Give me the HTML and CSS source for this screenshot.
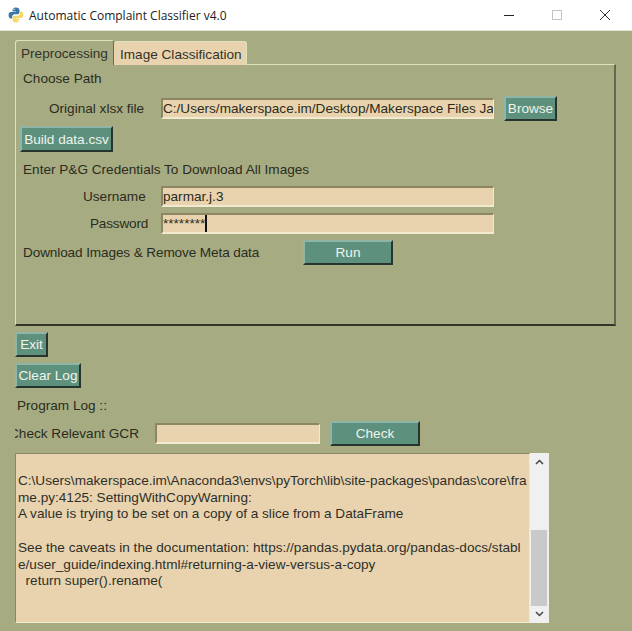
FILE: index.html
```html
<!DOCTYPE html>
<html lang="en">
<head>
<meta charset="utf-8">
<title>Automatic Complaint Classifier v4.0</title>
<link rel="stylesheet" href="styles.css">
</head>
<body>
<header class="titlebar">
  <svg class="app-icon" viewBox="0 0 16 16" width="16" height="16" aria-hidden="true">
    <path fill="#3a76a8" d="M7.8 0.5C5 0.5 4.6 1.6 4.6 2.8V4.4H8V5H3C1.5 5 .6 6.2.6 8.2c0 2 1 3.3 2.3 3.3H4.2V9.7c0-1.3 1.1-2.4 2.5-2.4h2.9c1 0 1.8-.9 1.8-2V2.8c0-1.300-1.300-2.300-3.600-2.300zM6 1.600a.7.7 0 1 1 0 1.400.7.7 0 0 1 0-1.400z"/>
    <path fill="#f5d76a" d="M8.200 15.500c2.800 0 3.200-1.100 3.200-2.300V11.600H8V11h5c1.500 0 2.400-1.200 2.400-3.200 0-2-1-3.300-2.300-3.300H11.800v1.800c0 1.300-1.100 2.400-2.500 2.400H6.400c-1 0-1.800.9-1.800 2v2.500c0 1.300 1.300 2.300 3.600 2.300zM10 14.400a.7.7 0 1 1 0-1.400.7.7 0 0 1 0 1.400z"/>
  </svg>
  <span class="title-text">Automatic Complaint Classifier v4.0</span>
  <div class="window-controls">
    <svg class="win-icon" viewBox="0 0 12 12" width="12" height="12" aria-hidden="true"><path d="M1 6.500H11" stroke="#222" fill="none"/></svg>
    <svg class="win-icon" viewBox="0 0 12 12" width="12" height="12" aria-hidden="true"><rect x="1.500" y="1.500" width="9" height="9" stroke="#c4c4c4" fill="none"/></svg>
    <svg class="win-icon" viewBox="0 0 12 12" width="12" height="12" aria-hidden="true"><path d="M1 1L11 11M11 1L1 11" stroke="#333" fill="none"/></svg>
  </div>
</header>

<main class="app">
  <nav class="tabs">
    <div class="tab tab-active">Preprocessing</div>
    <div class="tab">Image Classification</div>
  </nav>

  <section class="panel">
    <div class="label heading">Choose Path</div>
    <div class="path-row">
      <span class="label path-label">Original xlsx file</span>
      <div class="entry path-entry">C:/Users/makerspace.im/Desktop/Makerspace Files Ja</div>
      <button class="btn browse-btn">Browse</button>
    </div>
    <button class="btn build-btn">Build data.csv</button>
    <div class="label cred-heading">Enter P&amp;G Credentials To Download All Images</div>
    <div class="cred-row user-row">
      <span class="label user-label">Username</span>
      <div class="entry cred-entry">parmar.j.3</div>
    </div>
    <div class="cred-row pass-row">
      <span class="label pass-label">Password</span>
      <div class="entry cred-entry"><span>********</span><span class="caret"></span></div>
    </div>
    <div class="run-row">
      <span class="label run-label">Download Images &amp; Remove Meta data</span>
      <button class="btn wide-btn">Run</button>
    </div>
  </section>

  <button class="btn exit-btn">Exit</button>
  <button class="btn clear-btn">Clear Log</button>
  <div class="label log-label">Program Log ::</div>

  <div class="check-row">
    <div class="check-label"><span class="label">Check Relevant GCR</span></div>
    <div class="entry check-entry"></div>
    <button class="btn wide-btn">Check</button>
  </div>

  <div class="log-wrap">
    <div class="log-text">C:\Users\makerspace.im\Anaconda3\envs\pyTorch\lib\site-packages\pandas\core\fra
me.py:4125: SettingWithCopyWarning:
A value is trying to be set on a copy of a slice from a DataFrame

See the caveats in the documentation: https://pandas.pydata.org/pandas-docs/stabl
e/user_guide/indexing.html#returning-a-view-versus-a-copy
  return super().rename(</div>
    <div class="scrollbar">
      <svg class="arrow" viewBox="0 0 9 6" width="9" height="6" aria-hidden="true"><path d="M1 5L4.500 1.500L8 5" stroke="#444" stroke-width="1.500" fill="none"/></svg>
      <div class="track"><div class="thumb"></div></div>
      <svg class="arrow" viewBox="0 0 9 6" width="9" height="6" aria-hidden="true"><path d="M1 1L4.500 4.500L8 1" stroke="#444" stroke-width="1.500" fill="none"/></svg>
    </div>
  </div>
</main>
</body>
</html>
```

FILE: styles.css
```css
* { box-sizing: border-box; }
html, body { margin: 0; height: 100%; overflow: hidden; }
body {
  background: #a6ab82;
  color: #2b2b20;
  font-family: "Liberation Sans", Arial, sans-serif;
  font-size: 13.600px;
}
.titlebar {
  height: 31px;
  background: #fff;
  border-bottom: 1px solid #e4e6d6;
  display: flex;
  align-items: center;
  padding-left: 8px;
}
.app-icon { margin-right: 5px; }
.title-text {
  font-family: "Open Sans", sans-serif;
  font-size: 12px;
  color: #222;
}
.window-controls {
  margin-left: auto;
  display: flex;
  gap: 36px;
  padding-right: 21px;
}
.app { padding: 9px 0 0 15px; }
.tabs { display: flex; height: 25px; margin-bottom: -1px; position: relative; z-index: 1; }
.tab {
  background: #e8d3ae;
  border: 1px solid #dfe3c0;
  border-bottom: 0;
  border-left: 0;
  border-radius: 3px 3px 0 0;
  padding: 4px 0 0 6px;
  line-height: 18px;
  width: 133px;
  height: 24px;
  margin-top: 1px;
  color: #33332a;
  white-space: nowrap;
}
.tab-active {
  background: #a6ab82;
  border-left: 1px solid #dfe3c0;
  border-right: 1px solid #6b6d50;
  padding-left: 5px;
  width: 99px;
  height: 25px;
  margin-top: 0;
}
.panel {
  width: 601px;
  height: 262px;
  border: 1px solid #dfe3c0;
  border-right: 2px solid #66684c;
  border-bottom: 2px solid #34352a;
  padding: 5px 0 0 5px;
}
.label { line-height: 17px; white-space: nowrap; }
.heading { margin-left: 2px; }
.entry {
  background: #e8d3ae;
  border-top: 2px solid #8d8663;
  border-left: 2px solid #8d8663;
  border-right: 1px solid #f1ead0;
  border-bottom: 2px solid #f1ead0;
  height: 21px;
  line-height: 17px;
  overflow: hidden;
  white-space: nowrap;
}
.btn {
  display: block;
  background: #5d917e;
  color: #f0f3ea;
  font: inherit;
  line-height: 17px;
  padding: 0;
  height: 25px;
  border-top: 2px solid #8fb5a6;
  border-left: 2px solid #8fb5a6;
  border-right: 2px solid #27342d;
  border-bottom: 2px solid #27342d;
}
.path-row { display: flex; align-items: center; margin-top: 9px; height: 25px; }
.path-label { margin-left: 28px; width: 112px; }
.path-entry { width: 333px; }
.browse-btn { width: 53px; margin-left: 10px; }
.build-btn { width: 93px; height: 26px; margin-top: 5px; margin-left: -1px; }
.cred-heading { margin: 9px 0 0 2px; }
.cred-row { display: flex; align-items: center; height: 21px; }
.user-row { margin-top: 8px; }
.pass-row { margin-top: 6px; }
.user-label { margin-left: 62px; width: 78px; }
.pass-label { margin-left: 69px; width: 71px; letter-spacing: -0.2px; }
.cred-entry { width: 333px; }
.caret {
  display: inline-block;
  width: 2px;
  height: 17px;
  background: #111;
  vertical-align: top;
}
.run-row { display: flex; align-items: center; margin-top: 6px; height: 25px; }
.run-label { margin-left: 2px; width: 280px; letter-spacing: -0.12px; }
.wide-btn { width: 90px; }
.exit-btn { width: 33px; margin-top: 6px; }
.clear-btn { width: 66px; margin-top: 6px; }
.log-label { margin: 9px 0 0 2px; }
.check-row { display: flex; align-items: center; margin-top: 7px; height: 25px; }
.check-label {
  width: 124px;
  margin-right: 16px;
  display: flex;
  justify-content: flex-end;
  overflow: hidden;
}
.check-label .label { flex: none; }
.check-entry { width: 165px; margin-right: 10px; }
.log-wrap { display: flex; margin-top: 7px; height: 170px; }
.log-text {
  width: 515px;
  background: #e8d3ae;
  border-top: 1px solid #8d8663;
  border-left: 1px solid #8d8663;
  border-right: 1px solid #f1ead0;
  border-bottom: 1px solid #f1ead0;
  padding: 19px 0 0 2px;
  line-height: 16.700px;
  white-space: pre;
  overflow: hidden;
  color: #2f2f2a;
}
.scrollbar {
  width: 19px;
  background: #f0f0f0;
  display: flex;
  flex-direction: column;
  align-items: center;
  padding: 6px 0;
}
.arrow { flex: none; }
.track { flex: 1; width: 100%; display: flex; align-items: flex-end; padding: 0 2px 5px 1px; }
.thumb { width: 100%; height: 76px; background: #c9c9c9; }
```
